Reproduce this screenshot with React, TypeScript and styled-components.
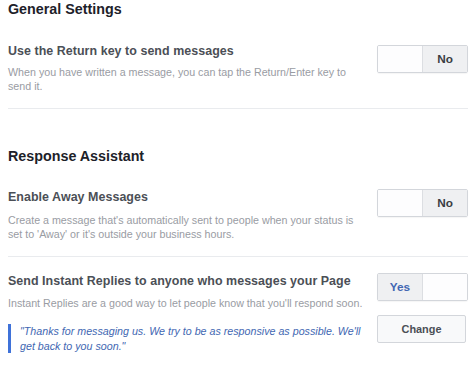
import React from "react";
import styled, { createGlobalStyle } from "styled-components";

const Global = createGlobalStyle`
  html, body { margin: 0; padding: 0; background: #ffffff; }
  body { font-family: "Liberation Sans", Arial, Helvetica, sans-serif; }
`;

const Page = styled.div`
  width: 460px;
  padding: 0 6px 0 8px;
  display: flex;
  flex-direction: column;
`;

const SectionTitle = styled.h2<{ $top: number }>`
  margin: ${(p) => p.$top}px 0 0;
  font-size: 14.3px;
  line-height: 18px;
  font-weight: bold;
  color: #1d2129;
`;

const Row = styled.div<{ $top: number }>`
  display: flex;
  justify-content: space-between;
  align-items: flex-start;
  margin-top: ${(p) => p.$top}px;
`;

const TextCol = styled.div`
  display: flex;
  flex-direction: column;
`;

const RowTitle = styled.div`
  font-size: 12.45px;
  line-height: 16px;
  font-weight: bold;
  color: #4b4f56;
  letter-spacing: 0.05px;
  white-space: nowrap;
`;

const Desc = styled.div<{ $top: number }>`
  margin-top: ${(p) => p.$top}px;
  font-size: 10.7px;
  line-height: 14px;
  color: #999ca3;
  white-space: nowrap;
`;

const Quote = styled.blockquote`
  margin: 14px 0 0;
  padding: 0 0 0 9px;
  border-left: 3px solid #3f72d9;
  font-size: 10.7px;
  line-height: 14.5px;
  font-style: italic;
  color: #4267b2;
  white-space: nowrap;
`;

const Controls = styled.div`
  display: flex;
  flex-direction: column;
  align-items: flex-start;
  gap: 14px;
`;

const Toggle = styled.div<{ $top: number }>`
  margin-top: ${(p) => p.$top}px;
  width: 89px;
  height: 26px;
  display: flex;
  border: 1px solid #d3d6db;
  border-radius: 2px;
  overflow: hidden;
  box-shadow: 0 1px 1px rgba(0, 0, 0, 0.04);
`;

const Segment = styled.div<{ $active: boolean; $blue?: boolean }>`
  flex: 1;
  display: flex;
  align-items: center;
  justify-content: center;
  background: ${(p) => (p.$active ? "#eff0f2" : "#fdfdfe")};
  font-size: 11.8px;
  font-weight: bold;
  color: ${(p) => (p.$blue ? "#4267b2" : "#3a3d42")};
  & + & {
    border-left: 1px solid #dcdee2;
  }
`;

const Button = styled.button`
  width: 89px;
  height: 28px;
  padding: 0;
  background: #f8f9fa;
  border: 1px solid #d3d6db;
  border-radius: 2px;
  font-family: inherit;
  font-size: 10.9px;
  font-weight: bold;
  color: #4b4f56;
`;

const Divider = styled.div<{ $top: number }>`
  margin-top: ${(p) => p.$top}px;
  height: 1px;
  background: #e9ebee;
`;

export default function App() {
  return (
    <>
      <Global />
      <Page>
        <SectionTitle $top={0}>General Settings</SectionTitle>
        <Row $top={25}>
          <TextCol>
            <RowTitle>Use the Return key to send messages</RowTitle>
            <Desc $top={6}>
              When you have written a message, you can tap the Return/Enter key to
              <br />
              send it.
            </Desc>
          </TextCol>
          <Toggle $top={2}>
            <Segment $active={false}></Segment>
            <Segment $active={true}>No</Segment>
          </Toggle>
        </Row>
        <Divider $top={15} />
        <SectionTitle $top={38}>Response Assistant</SectionTitle>
        <Row $top={24}>
          <TextCol>
            <RowTitle>Enable Away Messages</RowTitle>
            <Desc $top={8}>
              Create a message that's automatically sent to people when your status is
              <br />
              set to 'Away' or it's outside your business hours.
            </Desc>
          </TextCol>
          <Toggle $top={0}>
            <Segment $active={false}></Segment>
            <Segment $active={true}>No</Segment>
          </Toggle>
        </Row>
        <Divider $top={15} />
        <Row $top={16}>
          <TextCol>
            <RowTitle>Send Instant Replies to anyone who messages your Page</RowTitle>
            <Desc $top={7}>Instant Replies are a good way to let people know that you'll respond soon.</Desc>
            <Quote>
              "Thanks for messaging us. We try to be as responsive as possible. We'll
              <br />
              get back to you soon."
            </Quote>
          </TextCol>
          <Controls>
            <Toggle $top={0}>
              <Segment $active={true} $blue>
                Yes
              </Segment>
              <Segment $active={false}></Segment>
            </Toggle>
            <Button>Change</Button>
          </Controls>
        </Row>
      </Page>
    </>
  );
}
